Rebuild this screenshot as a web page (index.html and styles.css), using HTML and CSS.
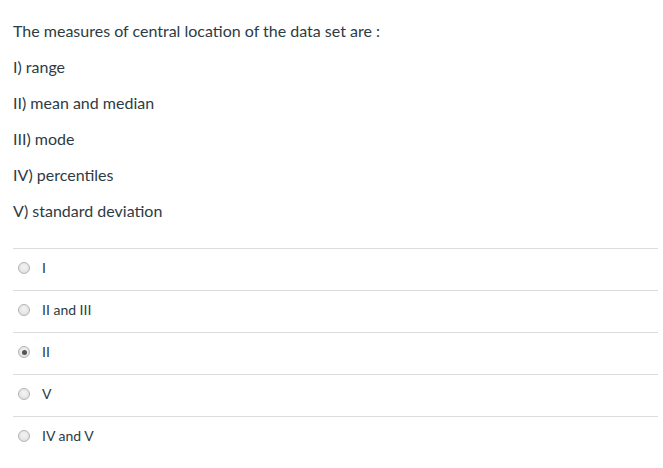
FILE: index.html
```html
<!DOCTYPE html>
<html>
<head>
<meta charset="utf-8">
<link rel="stylesheet" href="styles.css">
</head>
<body>
<div class="question">
  <div class="text">
    <p>The measures of central location of the data set are :</p>
    <p>I) range</p>
    <p>II) mean and median</p>
    <p>III) mode</p>
    <p>IV) percentiles</p>
    <p>V) standard deviation</p>
  </div>
  <div class="answers">
    <div class="answer"><span class="radio"></span><span class="label">I</span></div>
    <div class="answer"><span class="radio"></span><span class="label">II and III</span></div>
    <div class="answer"><span class="radio checked"></span><span class="label">II</span></div>
    <div class="answer"><span class="radio"></span><span class="label">V</span></div>
    <div class="answer"><span class="radio"></span><span class="label">IV and V</span></div>
  </div>
</div>
</body>
</html>
```
FILE: styles.css
```css
html, body {
  margin: 0;
  padding: 0;
  background: #fff;
}
body {
  font-family: Lato, "Open Sans", sans-serif;
  color: #2d3b45;
}
.question {
  padding: 7px 5px 0 13px;
}
.text p {
  margin: 12px 0;
  font-size: 16px;
  line-height: 24px;
}
.answers {
  margin-top: 25px;
}
.answer {
  display: flex;
  align-items: center;
  height: 38px;
  padding-bottom: 3px;
  border-top: 1px solid #dcdcdc;
}
.radio {
  width: 10px;
  height: 10px;
  border-radius: 50%;
  border: 1px solid #b3b3b3;
  background: radial-gradient(circle at 50% 40%, #f4f4f4 0%, #e3e3e3 70%, #d8d8d8 100%);
  margin-left: 5px;
  margin-right: 12px;
  position: relative;
  box-sizing: content-box;
}
.radio.checked::after {
  content: "";
  position: absolute;
  left: 2.5px;
  top: 2.5px;
  width: 5px;
  height: 5px;
  border-radius: 50%;
  background: #555;
}
.label {
  font-size: 14px;
  line-height: 20px;
}
```
